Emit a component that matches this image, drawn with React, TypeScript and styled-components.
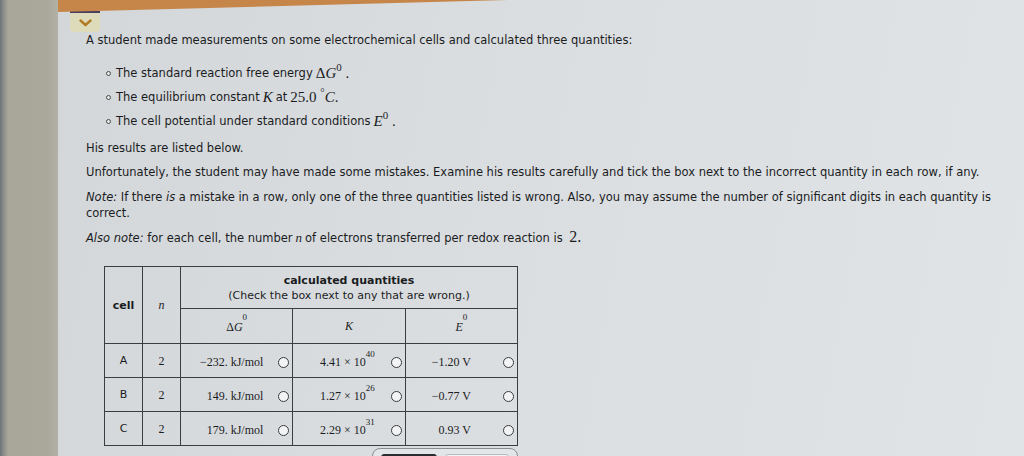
import React from 'react';
import styled, { createGlobalStyle } from 'styled-components';

const GlobalStyle = createGlobalStyle`
  html, body {
    margin: 0;
    padding: 0;
  }
  body {
    width: 1024px;
    height: 456px;
    overflow: hidden;
    background: #d9dde0;
    font-family: 'DejaVu Sans', Verdana, sans-serif;
    color: #1b1c1e;
  }
`;

const Screen = styled.div`
  display: flex;
  height: 456px;
  overflow: hidden;
`;

const Bezel = styled.div`
  width: 58px;
  flex-shrink: 0;
  background: linear-gradient(90deg, #6c7479 0, #8d908c 4px, #a8a699 8px, #aaa89b 48px, #b2b1a7 58px);
`;

const Page = styled.main`
  flex: 1;
  display: flex;
  flex-direction: column;
  background: linear-gradient(100deg, #d3d7da 0%, #d9dde0 40%, #e0e4e6 100%);
  font-size: 11.5px;
  line-height: 16px;

  & > * {
    flex-shrink: 0;
  }
`;

const TopBar = styled.div`
  height: 12px;
  width: 450px;
  background: #c6864a;
  clip-path: polygon(0 0, 100% 0, 0 100%);
`;

const Collapse = styled.button`
  margin: -1px 0 0 12px;
  width: 30px;
  height: 21px;
  padding: 0;
  border: none;
  border-top: 2px solid #4b3d5c;
  border-radius: 0 0 4px 4px;
  background: #dedbbb;
  display: flex;
  align-items: center;
  justify-content: center;
`;

const Body = styled.div`
  padding-left: 28px;
  display: flex;
  flex-direction: column;
`;

const Para = styled.p<{ $top: number }>`
  margin: ${p => p.$top}px 0 0;
  white-space: nowrap;
`;

const Bullets = styled.ul`
  margin: 13px 0 0;
  padding: 0 0 0 20px;
  list-style: none;
`;

const Bullet = styled.li`
  height: 24px;
  display: flex;
  align-items: center;
  white-space: nowrap;

  &::before {
    content: '';
    width: 3px;
    height: 3px;
    border: 1px solid #4a4a4a;
    border-radius: 50%;
    background: #e9e9e9;
    margin-right: 5px;
  }
`;

const Math = styled.span<{ $size?: number }>`
  font-family: 'Liberation Serif', 'Times New Roman', serif;
  font-size: ${p => p.$size ?? 15}px;
  margin: 0 3px;
`;

const Var = styled.i`
  font-style: italic;
`;

const Sup = styled.span<{ $rise: number; $size?: number }>`
  font-size: ${p => p.$size ?? 11}px;
  vertical-align: ${p => p.$rise}px;
  line-height: 0;
`;

const Em = styled.i`
  font-style: italic;
`;

const TableBlock = styled.div`
  margin: 20px 0 0 18px;
  width: 414px;
  display: flex;
  flex-direction: column;
`;

const Grid = styled.table`
  border-collapse: collapse;
  width: 414px;
  table-layout: fixed;
  font-size: 11px;
`;

const Head = styled.th<{ $w?: number; $h?: number }>`
  border: 1px solid #3c3d3f;
  width: ${p => (p.$w ? `${p.$w}px` : 'auto')};
  height: ${p => (p.$h ? `${p.$h}px` : 'auto')};
  padding: 0;
  font-weight: normal;
  text-align: center;
  vertical-align: middle;
  line-height: 15px;
`;

const Strong = styled.b`
  font-weight: bold;
`;

const Cell = styled.td<{ $serif?: boolean }>`
  border: 1px solid #3c3d3f;
  height: 33px;
  padding: 0;
  text-align: center;
  vertical-align: middle;
  font-family: ${p => (p.$serif ? "'Liberation Serif', 'Times New Roman', serif" : 'inherit')};
  font-size: ${p => (p.$serif ? 12 : 11)}px;
`;

const Answer = styled.div<{ $gap: number }>`
  display: flex;
  align-items: center;
  justify-content: flex-end;
  gap: ${p => p.$gap}px;
  padding: 3px 3px 0 0;
  font-family: 'Liberation Serif', 'Times New Roman', serif;
  font-size: 12px;
  white-space: nowrap;
`;

const Radio = styled.span`
  width: 9px;
  height: 9px;
  border: 1.4px solid #3a3b3d;
  border-radius: 50%;
  background: #f3f4f5;
  flex-shrink: 0;
`;

const Tray = styled.div`
  align-self: flex-end;
  margin-top: 2px;
  width: 146px;
  height: 30px;
  box-sizing: border-box;
  border: 1px solid #8b8d90;
  border-radius: 8px;
  padding: 5px 8px;
  display: flex;
  gap: 8px;
  background: #e3e6e8;
`;

const TrayButton = styled.span<{ $dark?: boolean }>`
  width: ${p => (p.$dark ? 58 : 66)}px;
  height: 18px;
  border-radius: 3px;
  background: ${p => (p.$dark ? '#2b2c2e' : '#f1f2f3')};
  border: 1px solid ${p => (p.$dark ? '#2b2c2e' : '#b9bbbd')};
`;

type Row = {
  cell: string;
  dg: string;
  k: string;
  exp: string;
  e: string;
};

const rows: Row[] = [
  { cell: 'A', dg: '\u2212232. kJ/mol', k: '4.41', exp: '40', e: '\u22121.20 V' },
  { cell: 'B', dg: '149. kJ/mol', k: '1.27', exp: '26', e: '\u22120.77 V' },
  { cell: 'C', dg: '179. kJ/mol', k: '2.29', exp: '31', e: '0.93 V' },
];

const Chevron = () => (
  <svg width="13" height="8" viewBox="0 0 13 8">
    <polyline points="1.5,1.5 6.5,6 11.5,1.5" fill="none" stroke="#b07b22" strokeWidth="2.4" strokeLinecap="round" strokeLinejoin="round" />
  </svg>
);

export default function App() {
  return (
    <>
      <GlobalStyle />
      <Screen>
        <Bezel />
        <Page>
          <TopBar />
          <Collapse type="button" aria-label="collapse">
            <Chevron />
          </Collapse>
          <Body>
            <Para $top={0}>
              A student made measurements on some electrochemical cells and calculated three quantities:
            </Para>
            <Bullets>
              <Bullet>
                The standard reaction free energy
                <Math>
                  Δ<Var>G</Var>
                  <Sup $rise={7}>0</Sup> .
                </Math>
              </Bullet>
              <Bullet>
                The equilibrium constant
                <Math>
                  <Var>K</Var>
                </Math>
                at
                <Math>
                  25.0 <Sup $rise={6}>°</Sup>
                  <Var>C</Var>.
                </Math>
              </Bullet>
              <Bullet>
                The cell potential under standard conditions
                <Math>
                  <Var>E</Var>
                  <Sup $rise={7}>0</Sup> .
                </Math>
              </Bullet>
            </Bullets>
            <Para $top={7}>His results are listed below.</Para>
            <Para $top={8}>
              Unfortunately, the student may have made some mistakes. Examine his results carefully and tick the box next to the incorrect quantity in each row, if any.
            </Para>
            <Para $top={9}>
              <Em>Note:</Em> If there <Em>is</Em> a mistake in a row, only one of the three quantities listed is wrong. Also, you may assume the number of significant digits in each quantity is
              <br />
              correct.
            </Para>
            <Para $top={8}>
              <Em>Also note:</Em> for each cell, the number
              <Math $size={13}>
                <Var>n</Var>
              </Math>
              of electrons transferred per redox reaction is <Math $size={16}>2.</Math>
            </Para>

            <TableBlock>
              <Grid>
                <thead>
                  <tr>
                    <Head rowSpan={2} $w={37}>
                      <Strong>cell</Strong>
                    </Head>
                    <Head rowSpan={2} $w={37}>
                      <Math $size={12}>
                        <Var>n</Var>
                      </Math>
                    </Head>
                    <Head colSpan={3} $h={41}>
                      <Strong>calculated quantities</Strong>
                      <br />
                      (Check the box next to any that are wrong.)
                    </Head>
                  </tr>
                  <tr>
                    <Head $w={110} $h={34}>
                      <Math $size={12}>
                        Δ<Var>G</Var>
                        <Sup $rise={11} $size={9}>0</Sup>
                      </Math>
                    </Head>
                    <Head $w={113} $h={34}>
                      <Math $size={12}>
                        <Var>K</Var>
                      </Math>
                    </Head>
                    <Head $h={34}>
                      <Math $size={12}>
                        <Var>E</Var>
                        <Sup $rise={11} $size={9}>0</Sup>
                      </Math>
                    </Head>
                  </tr>
                </thead>
                <tbody>
                  {rows.map(r => (
                    <tr key={r.cell}>
                      <Cell>{r.cell}</Cell>
                      <Cell $serif>2</Cell>
                      <Cell>
                        <Answer $gap={15}>
                          <span>{r.dg}</span>
                          <Radio />
                        </Answer>
                      </Cell>
                      <Cell>
                        <Answer $gap={16}>
                          <span>
                            {r.k} × 10<Sup $rise={9} $size={9}>{r.exp}</Sup>
                          </span>
                          <Radio />
                        </Answer>
                      </Cell>
                      <Cell>
                        <Answer $gap={32}>
                          <span>{r.e}</span>
                          <Radio />
                        </Answer>
                      </Cell>
                    </tr>
                  ))}
                </tbody>
              </Grid>
              <Tray>
                <TrayButton $dark />
                <TrayButton />
              </Tray>
            </TableBlock>
          </Body>
        </Page>
      </Screen>
    </>
  );
}
